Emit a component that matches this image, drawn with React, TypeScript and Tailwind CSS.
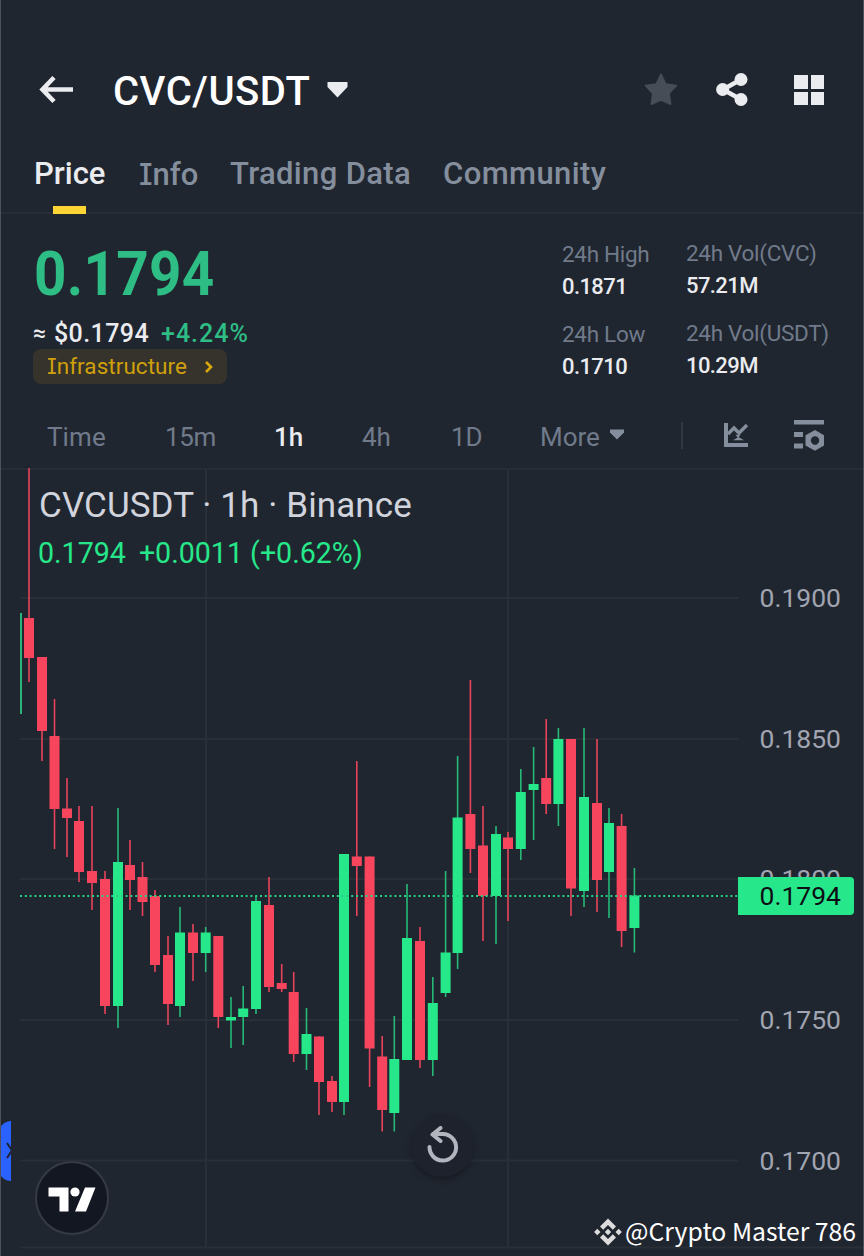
type Candle = [x: number, high: number, top: number, bottom: number, low: number, up: 0 | 1];

const candles: Candle[] = [
  [29, 468, 618, 658, 682, 0],
  [42, 657, 657, 731, 761, 0],
  [54.5, 699, 736, 809, 849, 0],
  [67, 778, 808.5, 818, 857, 0],
  [79, 806, 821, 872, 882, 0],
  [92, 806, 871, 883, 910, 0],
  [105, 871, 879, 1006, 1014, 0],
  [118, 808, 862, 1006, 1028, 1],
  [130, 840, 865, 880, 910, 0],
  [142.5, 862, 877, 902, 916, 0],
  [155, 890, 896, 965, 972, 0],
  [168, 936, 955, 1004, 1025, 0],
  [180, 907, 932.5, 1006, 1017, 1],
  [193, 924, 932.5, 953, 981, 0],
  [205.7, 927, 932.5, 953, 972, 1],
  [218.3, 936, 936, 1017, 1028, 0],
  [231, 997, 1017, 1020.5, 1048, 1],
  [243.2, 986, 1008.5, 1017, 1045, 1],
  [256, 896, 901, 1009, 1014, 1],
  [269, 877, 905, 987, 992, 0],
  [281.7, 964, 983, 989, 992, 0],
  [293.7, 972, 992, 1054, 1062, 0],
  [306.5, 1008, 1034, 1054, 1070, 1],
  [319, 1036.5, 1036.5, 1082, 1115, 0],
  [332, 1076, 1081, 1102, 1112, 0],
  [344, 854, 854, 1102, 1115, 1],
  [356.8, 761, 856.5, 866, 916, 0],
  [369.6, 856.5, 856.5, 1048.5, 1087, 0],
  [382.2, 1036, 1056.5, 1110, 1131.5, 0],
  [394.3, 1016, 1059, 1113, 1131.5, 1],
  [407, 884, 938, 1060, 1060, 1],
  [420, 927, 941, 1060, 1068, 0],
  [432.8, 977, 1003, 1060, 1076, 1],
  [445.6, 871, 952.5, 993, 997, 1],
  [457.6, 756, 817.5, 953, 969, 1],
  [470.4, 680, 814, 849, 873, 0],
  [483, 806, 845.5, 896, 941, 0],
  [496, 826, 834, 896, 944, 1],
  [508, 832, 837.5, 849, 921, 0],
  [520.8, 769, 792, 849, 860, 1],
  [533.6, 747, 784, 790, 840, 1],
  [546.2, 719, 778, 804, 814, 0],
  [558.4, 728, 739, 804, 826, 1],
  [571, 739, 739, 888.5, 916, 0],
  [584, 728, 797, 891, 907, 1],
  [597, 739, 803, 880, 912, 0],
  [609, 808, 823, 872, 918, 1],
  [621.6, 814, 826, 931, 947, 0],
  [634.4, 868, 895.5, 928, 952.5, 1],
];

const priceLevels = [
  { y: 598, label: "0.1900" },
  { y: 739, label: "0.1850" },
  { y: 879, label: "0.1800" },
  { y: 1020, label: "0.1750" },
  { y: 1160.5, label: "0.1700" },
];

function Header() {
  return (
    <header className="flex h-36 items-start pt-[69px]">
      <svg className="ml-[39px] mt-[5px] h-8 w-[34px]" viewBox="0 0 34 32" fill="none" stroke="#eaecef" strokeWidth="4.6">
        <path d="M34 15.5H4M15 3.5L3.5 15.5L15 27.5" />
      </svg>
      <h1 className="ml-[40px] mt-px w-[198px] text-[40px] font-medium leading-[44px] tracking-[0.5px] text-white">CVC/USDT</h1>
      <svg className="ml-[16px] mt-[12px] h-[18px] w-[21px]" viewBox="0 0 21 18" fill="#eaecef">
        <path d="M0.5 1h20v5L10.5 16.5L0.5 6z" />
      </svg>
      <svg className="ml-[296px] mt-[3px] h-9 w-[34px]" viewBox="0 0 34 36" fill="#474d57" stroke="#474d57" strokeWidth="1.5" strokeLinejoin="round">
        <path d="M17 2L21.8 12L32.5 13.6L25.1 21.4L26.7 32.3L17 28L7.3 32.3L8.7 21.4L1.4 13.6L12.2 12z" />
      </svg>
      <svg className="ml-[38px] mt-[3px] h-9 w-8" viewBox="0 0 32 36" fill="#eaecef">
        <path d="M7 17.5L25 7.5M7 17.5L25 27.5" stroke="#eaecef" strokeWidth="4.4" />
        <circle cx="6.6" cy="17.5" r="6.5" />
        <circle cx="25" cy="7.5" r="6.5" />
        <circle cx="25" cy="27.5" r="6.5" />
      </svg>
      <div className="ml-[46px] mt-[6px] grid grid-cols-2 gap-[3px]">
        <i className="size-[13.5px] bg-[#eaecef]" />
        <i className="size-[13.5px] bg-[#eaecef]" />
        <i className="size-[13.5px] bg-[#eaecef]" />
        <i className="size-[13.5px] bg-[#eaecef]" />
      </div>
    </header>
  );
}

function Tabs() {
  return (
    <nav className="flex h-[70px] items-start border-b-2 border-[#272d36] text-[31px] font-medium leading-[60px] text-[#848e9c]">
      <div className="relative ml-[34px] w-[71px] text-[#eaecef]">
        Price
        <span className="absolute left-[19px] top-[62px] h-2 w-[33px] bg-[#fcd535]" />
      </div>
      <div className="ml-[34px] w-[59px]">
        <span className="font-['Inter'] text-[30px] [font-feature-settings:'cv08']">I</span>nfo
      </div>
      <div className="ml-[32px] w-[181px] tracking-[0.35px]">Trading Data</div>
      <div className="ml-[32px] tracking-[0.4px]">Community</div>
    </nav>
  );
}

function Stat({ label, value }: { label: string; value: string }) {
  return (
    <div className="h-20">
      <div className="text-[22.5px] leading-[29px] tracking-[-0.3px] text-[#707a8a]">{label}</div>
      <div className="text-[22px] font-medium leading-[36px] tracking-[-0.6px] text-[#eaecef]">{value}</div>
    </div>
  );
}

function Summary() {
  return (
    <section className="flex h-[186px]">
      <div className="w-[562px] pl-[33px]">
        <div className="ml-px mt-[30px] h-[60px] w-fit origin-left scale-x-[0.928] text-[61px] font-bold leading-[60px] tracking-[0.3px] text-[#2ebd85]">0.1794</div>
        <div className="mt-[14px] flex h-[30px] text-[25px] font-medium leading-[32px] text-[#eaecef]">
          <span className="w-[21px] text-[23px]">≈</span>
          <span className="w-[107px] tracking-[0.4px]">$0.1794</span>
          <span className="tracking-[1px] text-[#2ebd85]">+4.24%</span>
        </div>
        <div className="mt-px flex h-[35px] w-[194px] items-center rounded-lg bg-[#35332b] pl-[14px] text-[22.5px] text-[#d0a00c]">
          <span className="w-[158px] tracking-[0.05px]">
            <span className="font-['Inter'] text-[22px] [font-feature-settings:'cv08']">I</span>nfrastructure
          </span>
          <svg className="h-3 w-2" viewBox="0 0 8 12" fill="none" stroke="#d9a80c" strokeWidth="2.6">
            <path d="M1 1L6 6L1 11" />
          </svg>
        </div>
      </div>
      <div className="mt-[26px] w-[124px]">
        <Stat label="24h High" value="0.1871" />
        <Stat label="24h Low" value="0.1710" />
      </div>
      <div className="mt-[25px]">
        <Stat label="24h Vol(CVC)" value="57.21M" />
        <Stat label="24h Vol(USDT)" value="10.29M" />
      </div>
    </section>
  );
}

function IntervalBar() {
  return (
    <div className="flex h-[70px] items-start border-b-2 border-[#272d36] text-[26px] leading-[74px] text-[#707a8a]">
      <span className="ml-[47px] w-[118px] tracking-[0.1px]">Time</span>
      <span className="w-[109px] tracking-[-0.4px]">15m</span>
      <span className="w-[88px] font-medium text-[#eaecef]">1h</span>
      <span className="w-[89px]">4h</span>
      <span className="w-[89px]">1D</span>
      <span className="w-[70px]">More</span>
      <svg className="mt-[29px] h-3 w-[14px]" viewBox="0 0 14 12" fill="#848e9c">
        <path d="M0 0.5h14v3L7 10.5L0 3.5z" />
      </svg>
      <span className="ml-[57px] mt-[22px] h-[27px] w-[2px] bg-[#323843]" />
      <svg className="ml-[41px] mt-[22px] h-[26px] w-[26px]" viewBox="0 0 26 26" fill="none" stroke="#848e9c">
        <path d="M2 1V23H24" strokeWidth="4" />
        <path d="M4 12L10 6L15 11L23 3" strokeWidth="3.4" />
        <path d="M9 18.2L14.5 15L20 18.2zM11.5 12.8h5L14 16z" fill="#848e9c" stroke="none" />
      </svg>
      <svg className="ml-[43px] mt-[20px] h-8 w-[32px]" viewBox="0 0 32 32" fill="#848e9c">
        <path d="M1 0h30v4.5H1zM1 12h9v5H1zM1 23.5h9v5H1z" />
        <path fillRule="evenodd" d="M22 10L31 15.3V25.5L22 30.7L12.5 25.5V15.3zM22 16.3a4.2 4.2 0 1 0 .01 0z" />
      </svg>
    </div>
  );
}

function Chart() {
  return (
    <section className="relative -mt-[2px] h-[788px] overflow-hidden">
      <svg className="block h-[788px] w-[864px]" viewBox="0 468 864 788">
        <g stroke="#292e37" strokeWidth="2">
          {priceLevels.map((p) => (
            <line key={p.label} x1="20" x2="738" y1={p.y} y2={p.y} />
          ))}
          <line x1="20" x2="864" y1="1247.5" y2="1247.5" />
          <line x1="206" x2="206" y1="468" y2="1247" />
          <line x1="508" x2="508" y1="468" y2="1247" />
        </g>
        <rect x="20" y="613" width="2" height="101" fill="#2bb679" />
        {candles.map(([x, high, top, bottom, low, up]) => (
          <g key={x}>
            <rect x={x - 0.8} y={high} width="1.6" height={low - high} fill={up ? "#27b878" : "#e8425a"} />
            <rect x={x - 5} y={top} width="10" height={bottom - top} fill={up ? "#26e88a" : "#f8455e"} />
          </g>
        ))}
        <line x1="20" x2="738" y1="896" y2="896" stroke="#29d083" strokeWidth="2" strokeDasharray="2 2.8" />
        <g className="font-['Roboto'] text-[26.5px]" fill="#a0a5b1">
          {priceLevels.map((p) => (
            <text key={p.label} x="759.5" y={p.y + 9.4}>{p.label}</text>
          ))}
        </g>
        <path d="M738 877h112a4 4 0 0 1 4 4v30a4 4 0 0 1-4 4H738z" fill="#26e88a" />
        <text x="759.5" y="905" className="font-['Roboto'] text-[26.5px]" fill="#0c0e14">0.1794</text>
      </svg>

      <div className="absolute left-[38px] top-[16px] whitespace-pre text-[#d1d4dc]">
        <div className="ml-px text-[35px] leading-[43px] tracking-[0.1px]">CVCUSDT · 1h · Binance</div>
        <div className="mt-[10px] text-[28.6px] leading-[32px] text-[#26e88a]">
          0.1794<span className="ml-[13px]">+0.0011 (+0.62%)</span>
        </div>
      </div>

      <div className="absolute left-[411px] top-[646px] flex size-[63px] items-center justify-center rounded-full bg-[#1e222d] shadow-[0_3px_6px_rgba(0,0,0,0.3)]">
        <svg className="size-10" viewBox="0 0 40 40" fill="none" stroke="#b2b5be" strokeWidth="4" strokeLinecap="round" strokeLinejoin="round">
          <path d="M6.5 21A13.3 13.3 0 1 0 20 8H10M17.5 2L9.5 8.5L17.5 15" />
        </svg>
      </div>

      <div className="absolute -left-px top-[653px] h-[60px] w-[12px] overflow-hidden rounded-l-xl bg-[#2962ff]">
        <svg className="ml-[7px] mt-[21px] h-[17px] w-[9px]" viewBox="0 0 9 17" fill="none" stroke="#1e222d" strokeWidth="2">
          <path d="M1 1L6 8.5L1 16" />
        </svg>
      </div>

      <div className="absolute left-[35px] top-[693px] flex size-[74px] items-center justify-center rounded-full border-2 border-[#363a45] bg-[#131722]">
        <svg className="mt-[2px] h-[25px] w-[48px]" viewBox="0 0 48 25" fill="#fff">
          <path d="M0.5 0.5H20.5V24.5H11.5V9.5H0.5zM37 0.5H47.5L38 24.5H27z" />
          <circle cx="27" cy="5" r="4.6" />
        </svg>
      </div>

      <div className="absolute bottom-[8px] right-[8px] flex h-[32px] items-center text-white">
        <svg className="mr-[3px] size-7" viewBox="0 0 28 28" fill="#dcdcdc">
          <path d="M14 0.5L22 8.5L18.8 11.7L14 6.9L9.2 11.7L6 8.5zM14 27.5L22 19.5L18.8 16.3L14 21.1L9.2 16.3L6 19.5zM14 10.8L17.2 14L14 17.2L10.8 14zM3.3 10.8L6.5 14L3.3 17.2L0.1 14zM24.7 10.8L27.9 14L24.7 17.2L21.5 14z" />
        </svg>
        <span className="-mt-[2px] whitespace-nowrap font-['Noto_Sans_CJK_SC',sans-serif] text-[24.75px]">@Crypto Master 786</span>
      </div>
    </section>
  );
}

export default function App() {
  return (
    <div className="relative h-[1256px] w-[864px] overflow-hidden whitespace-nowrap bg-[#202630] font-['Roboto',sans-serif]">
      <Header />
      <Tabs />
      <Summary />
      <IntervalBar />
      <Chart />
      <div className="pointer-events-none absolute inset-0 border-x border-[#4c515b]" />
    </div>
  );
}
